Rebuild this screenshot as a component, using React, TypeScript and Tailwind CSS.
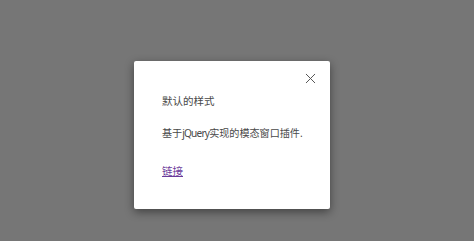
import { X } from "lucide-react";

export default function App() {
  return (
    <div
      className="h-screen w-screen bg-[#767676] pt-[61px] pl-[134px]"
      style={{ fontFamily: '"Noto Sans", "Noto Sans CJK SC", sans-serif' }}
    >
      <div className="relative w-[196px] h-[148px] bg-white rounded-[2px] shadow-[0_3px_10px_rgba(0,0,0,0.45)] pl-[28px] pt-[33px]">
        <button className="absolute top-[9px] right-[11px] text-[#555]">
          <X className="size-[17px]" strokeWidth={1.4} />
        </button>
        <p className="text-[10.5px] leading-[14px] text-[#484848]">默认的样式</p>
        <p className="mt-[18px] text-[10.1px] leading-[14px] text-[#484848]">
          基于<span className="tracking-[-0.8px]">jQuery</span>实现的模态窗口插件.
        </p>
        <a href="#" className="block mt-[24px] w-fit text-[10.5px] leading-[14px] text-[#6a3a9a] underline">
          链接
        </a>
      </div>
    </div>
  );
}
